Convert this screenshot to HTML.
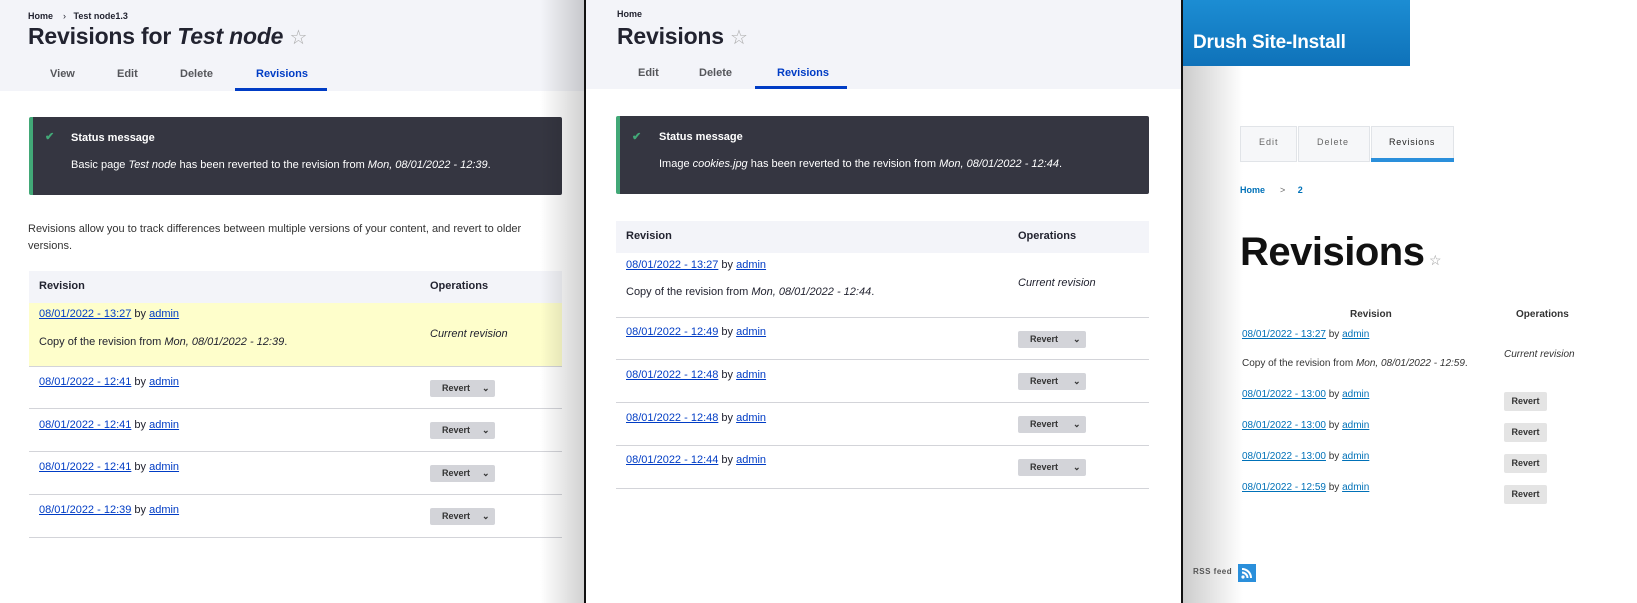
<!DOCTYPE html>
<html><head><meta charset="utf-8"><style>
*{margin:0;padding:0;box-sizing:border-box}
body{width:1637px;height:603px;position:relative;overflow:hidden;background:#fff;font-family:"Liberation Sans",sans-serif;color:#222330}
.a{position:absolute;white-space:nowrap}
a{color:#003cc5;text-decoration:underline}
.hdr{background:#f3f4f9}
.bc{font-size:9px;font-weight:bold;color:#222330}
.ttl{font-size:23px;font-weight:bold;letter-spacing:-0.2px}
.star{color:#aaa;font-weight:normal;font-size:20px}
.tab{font-size:11px;font-weight:bold;color:#55565b}
.tab.on{color:#003cc5}
.msg{background:#353641;border-left:4px solid #42a877;border-radius:2px;color:#fff}
.fs{font-size:11px}
.th{background:#f3f4f9;font-size:11px;font-weight:bold}
.line{height:1px;background:#d3d4d9}
.btn{background:#d3d4d9;height:17px;border-radius:2px;font-size:9px;font-weight:bold;color:#333;line-height:17px}
.btn span{position:absolute}
.p3 a{color:#0071b8}
</style></head><body>

<!-- Panel 1 -->
<div class="a hdr" style="left:0;top:0;width:584px;height:91px"></div>
<div class="a bc" style="left:28px;top:11px">Home &nbsp;&nbsp; <span style="font-weight:normal">›</span> &nbsp;&nbsp;Test node1.3</div>
<div class="a ttl" style="left:28px;top:23px">Revisions for <i>Test node</i> <span class="star">☆</span></div>
<div class="a tab" style="left:50px;top:68px">View</div>
<div class="a tab" style="left:117px;top:68px">Edit</div>
<div class="a tab" style="left:180px;top:68px">Delete</div>
<div class="a tab on" style="left:256px;top:68px">Revisions</div>
<div class="a" style="left:235px;top:88px;width:92px;height:3px;background:#003cc5"></div>
<div class="a msg" style="left:29px;top:117px;width:533px;height:78px"></div>
<div class="a" style="left:45px;top:130px;color:#42a877;font-size:11px;font-weight:bold">✔</div>
<div class="a fs" style="left:71px;top:132px;color:#fff;font-weight:bold">Status message</div>
<div class="a fs" style="left:71px;top:159px;color:#fff">Basic page <i>Test node</i> has been reverted to the revision from <i>Mon, 08/01/2022 - 12:39</i>.</div>
<div class="a fs" style="left:28px;top:223px;color:#333">Revisions allow you to track differences between multiple versions of your content, and revert to older</div>
<div class="a fs" style="left:28px;top:240px;color:#333">versions.</div>
<div class="a th" style="left:29px;top:271px;width:533px;height:32px"></div>
<div class="a fs" style="left:39px;top:280px;font-weight:bold">Revision</div>
<div class="a fs" style="left:430px;top:280px;font-weight:bold">Operations</div>
<div class="a" style="left:29px;top:303px;width:533px;height:63px;background:#fefecb"></div>
<div class="a fs" style="left:39px;top:308px"><a>08/01/2022 - 13:27</a> by <a>admin</a></div>
<div class="a fs" style="left:39px;top:336px">Copy of the revision from <i>Mon, 08/01/2022 - 12:39</i>.</div>
<div class="a fs" style="left:430px;top:328px"><i>Current revision</i></div>
<div class="a line" style="left:29px;top:366px;width:533px"></div>
<div class="a fs" style="left:39px;top:376px"><a>08/01/2022 - 12:41</a> by <a>admin</a></div>
<div class="a btn" style="left:430px;top:380px;width:65px"><span style="left:12px">Revert</span><span style="left:52px">⌄</span></div>
<div class="a line" style="left:29px;top:408px;width:533px"></div>
<div class="a fs" style="left:39px;top:419px"><a>08/01/2022 - 12:41</a> by <a>admin</a></div>
<div class="a btn" style="left:430px;top:422px;width:65px"><span style="left:12px">Revert</span><span style="left:52px">⌄</span></div>
<div class="a line" style="left:29px;top:451px;width:533px"></div>
<div class="a fs" style="left:39px;top:461px"><a>08/01/2022 - 12:41</a> by <a>admin</a></div>
<div class="a btn" style="left:430px;top:465px;width:65px"><span style="left:12px">Revert</span><span style="left:52px">⌄</span></div>
<div class="a line" style="left:29px;top:494px;width:533px"></div>
<div class="a fs" style="left:39px;top:504px"><a>08/01/2022 - 12:39</a> by <a>admin</a></div>
<div class="a btn" style="left:430px;top:508px;width:65px"><span style="left:12px">Revert</span><span style="left:52px">⌄</span></div>
<div class="a line" style="left:29px;top:537px;width:533px"></div>
<div class="a" style="left:540px;top:0;width:44px;height:603px;background:linear-gradient(90deg,rgba(0,0,0,0),rgba(0,0,0,0.18))"></div>
<div class="a" style="left:584px;top:0;width:2px;height:603px;background:#111"></div>

<!-- Panel 2 -->
<div class="a hdr" style="left:586px;top:0;width:597px;height:89px"></div>
<div class="a bc" style="left:617px;top:9px">Home</div>
<div class="a ttl" style="left:617px;top:23px">Revisions <span class="star">☆</span></div>
<div class="a tab" style="left:638px;top:67px">Edit</div>
<div class="a tab" style="left:699px;top:67px">Delete</div>
<div class="a tab on" style="left:777px;top:67px">Revisions</div>
<div class="a" style="left:755px;top:86px;width:92px;height:3px;background:#003cc5"></div>
<div class="a msg" style="left:616px;top:116px;width:533px;height:78px"></div>
<div class="a" style="left:632px;top:130px;color:#42a877;font-size:11px;font-weight:bold">✔</div>
<div class="a fs" style="left:659px;top:131px;color:#fff;font-weight:bold">Status message</div>
<div class="a fs" style="left:659px;top:158px;color:#fff">Image <i>cookies.jpg</i> has been reverted to the revision from <i>Mon, 08/01/2022 - 12:44</i>.</div>
<div class="a th" style="left:616px;top:221px;width:533px;height:32px"></div>
<div class="a fs" style="left:626px;top:230px;font-weight:bold">Revision</div>
<div class="a fs" style="left:1018px;top:230px;font-weight:bold">Operations</div>
<div class="a fs" style="left:626px;top:259px"><a>08/01/2022 - 13:27</a> by <a>admin</a></div>
<div class="a fs" style="left:626px;top:286px">Copy of the revision from <i>Mon, 08/01/2022 - 12:44</i>.</div>
<div class="a fs" style="left:1018px;top:277px"><i>Current revision</i></div>
<div class="a line" style="left:616px;top:317px;width:533px"></div>
<div class="a fs" style="left:626px;top:326px"><a>08/01/2022 - 12:49</a> by <a>admin</a></div>
<div class="a btn" style="left:1018px;top:331px;width:68px"><span style="left:12px">Revert</span><span style="left:55px">⌄</span></div>
<div class="a line" style="left:616px;top:359px;width:533px"></div>
<div class="a fs" style="left:626px;top:369px"><a>08/01/2022 - 12:48</a> by <a>admin</a></div>
<div class="a btn" style="left:1018px;top:373px;width:68px"><span style="left:12px">Revert</span><span style="left:55px">⌄</span></div>
<div class="a line" style="left:616px;top:402px;width:533px"></div>
<div class="a fs" style="left:626px;top:412px"><a>08/01/2022 - 12:48</a> by <a>admin</a></div>
<div class="a btn" style="left:1018px;top:416px;width:68px"><span style="left:12px">Revert</span><span style="left:55px">⌄</span></div>
<div class="a line" style="left:616px;top:445px;width:533px"></div>
<div class="a fs" style="left:626px;top:454px"><a>08/01/2022 - 12:44</a> by <a>admin</a></div>
<div class="a btn" style="left:1018px;top:459px;width:68px"><span style="left:12px">Revert</span><span style="left:55px">⌄</span></div>
<div class="a line" style="left:616px;top:488px;width:533px"></div>
<div class="a" style="left:1181px;top:0;width:2px;height:603px;background:#111"></div>

<!-- Panel 3 -->
<div class="p3">
<div class="a" style="left:1183px;top:0;width:227px;height:66px;background:linear-gradient(180deg,#1c8dd3,#0f72b9)"></div>
<div class="a" style="left:1193px;top:32px;color:#fff;font-size:19px;font-weight:bold;letter-spacing:-0.2px">Drush Site-Install</div>
<div class="a" style="left:1183px;top:66px;width:60px;height:537px;background:linear-gradient(90deg,rgba(0,0,0,0.2),rgba(0,0,0,0))"></div>
<div class="a" style="left:1240px;top:126px;width:57px;height:36px;background:#f6f7f9;border:1px solid #e1e4e8"></div>
<div class="a" style="left:1298px;top:126px;width:72px;height:36px;background:#f6f7f9;border:1px solid #e1e4e8"></div>
<div class="a" style="left:1371px;top:126px;width:83px;height:36px;background:#f6f7f9;border:1px solid #e1e4e8"></div>
<div class="a" style="left:1371px;top:158px;width:83px;height:4px;background:#2a8fdb"></div>
<div class="a" style="left:1259px;top:137px;font-size:9px;color:#666;letter-spacing:1px">Edit</div>
<div class="a" style="left:1317px;top:137px;font-size:9px;color:#666;letter-spacing:1px">Delete</div>
<div class="a" style="left:1389px;top:137px;font-size:9px;color:#222;letter-spacing:0.8px">Revisions</div>
<div class="a" style="left:1240px;top:185px;font-size:9px;font-weight:bold;color:#0071b8">Home &nbsp;&nbsp;&nbsp;&nbsp; <span style="color:#666;font-weight:normal">&gt;</span> &nbsp;&nbsp;&nbsp;&nbsp;2</div>
<div class="a" style="left:1240px;top:230px;font-size:40px;font-weight:bold;color:#111;letter-spacing:-0.5px">Revisions</div>
<div class="a" style="left:1429px;top:252px;font-size:14px;color:#999">☆</div>
<div class="a" style="left:1350px;top:309px;font-size:10px;font-weight:bold;color:#333">Revision</div>
<div class="a" style="left:1516px;top:309px;font-size:10px;font-weight:bold;color:#333">Operations</div>
<div class="a" style="left:1242px;top:329px;font-size:10px;color:#333"><a>08/01/2022 - 13:27</a> by <a>admin</a></div>
<div class="a" style="left:1242px;top:358px;font-size:10px;color:#333">Copy of the revision from <i>Mon, 08/01/2022 - 12:59</i>.</div>
<div class="a" style="left:1504px;top:349px;font-size:10px;color:#333"><i>Current revision</i></div>
<div class="a" style="left:1242px;top:389px;font-size:10px;color:#333"><a>08/01/2022 - 13:00</a> by <a>admin</a></div>
<div class="a" style="left:1242px;top:420px;font-size:10px;color:#333"><a>08/01/2022 - 13:00</a> by <a>admin</a></div>
<div class="a" style="left:1242px;top:451px;font-size:10px;color:#333"><a>08/01/2022 - 13:00</a> by <a>admin</a></div>
<div class="a" style="left:1242px;top:482px;font-size:10px;color:#333"><a>08/01/2022 - 12:59</a> by <a>admin</a></div>
<div class="a" style="left:1504px;top:392px;width:43px;height:19px;background:#e4e4e4;border-radius:2px;font-size:9px;font-weight:bold;color:#333;text-align:center;line-height:19px">Revert</div>
<div class="a" style="left:1504px;top:423px;width:43px;height:19px;background:#e4e4e4;border-radius:2px;font-size:9px;font-weight:bold;color:#333;text-align:center;line-height:19px">Revert</div>
<div class="a" style="left:1504px;top:454px;width:43px;height:19px;background:#e4e4e4;border-radius:2px;font-size:9px;font-weight:bold;color:#333;text-align:center;line-height:19px">Revert</div>
<div class="a" style="left:1504px;top:485px;width:43px;height:19px;background:#e4e4e4;border-radius:2px;font-size:9px;font-weight:bold;color:#333;text-align:center;line-height:19px">Revert</div>
<div class="a" style="left:1193px;top:567px;font-size:8px;font-weight:bold;color:#555;letter-spacing:0.5px">RSS feed</div>
<svg class="a" style="left:1238px;top:564px" width="18" height="18" viewBox="0 0 18 18"><rect width="18" height="18" fill="#2a8fdb"/><circle cx="5" cy="13" r="1.6" fill="#fff"/><path d="M4 8.5a5.5 5.5 0 0 1 5.5 5.5M4 5a9 9 0 0 1 9 9" stroke="#fff" stroke-width="2" fill="none"/></svg>
</div>
</body></html>
